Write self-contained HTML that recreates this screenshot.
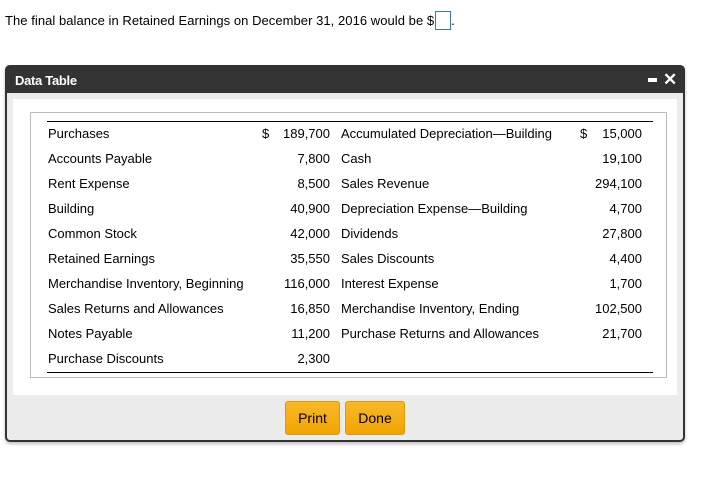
<!DOCTYPE html>
<html><head><style>
*{margin:0;padding:0;box-sizing:border-box}
body{width:701px;height:481px;background:#fff;font-family:"Liberation Sans",Arial,sans-serif;font-size:13px;color:#000;position:relative;overflow:hidden}
.q{position:absolute;left:5px;top:11px;white-space:nowrap;font-size:13px;letter-spacing:0.05px}
.box{display:inline-block;width:16px;height:19px;border:1px solid #3a6fd6;vertical-align:-5px;margin-left:1px}
.dlg{position:absolute;left:5px;top:65px;width:680px;height:377px;background:#ececec;border:2px solid #333;border-top:none;border-radius:5px;box-shadow:0 2px 3px rgba(0,0,0,.25)}
.hd{position:absolute;left:-2px;top:0;width:680px;height:28px;background:#333;border-radius:5px 5px 0 0;color:#fff;font-weight:bold;font-size:13px;padding:8px 0 0 10px;letter-spacing:-.3px}
.hd .mn{position:absolute;right:28px;top:13px;width:9px;height:4px;background:#fff}
.hd .x{position:absolute;right:8px;top:5px;font-size:17px}
.wp{position:absolute;left:6px;top:34px;width:664px;height:296px;background:#fff}
.tb{position:absolute;left:17px;top:13px;width:637px;height:266px;border:1px solid #bbb}
.l1{position:absolute;left:16px;top:8px;width:606px;border-top:1px solid #000}
.l2{position:absolute;left:16px;top:259px;width:606px;border-top:1px solid #000}
.r{position:absolute;left:0;height:20px;width:100%}
.r span{position:absolute;top:0;white-space:nowrap}
.btn{position:absolute;top:336px;height:34px;background:linear-gradient(#f8b82a,#f1a500);border:1px solid #dc9a10;border-radius:3px;font-size:14px;text-align:center;line-height:32px}
</style></head><body>
<div class="q">The final balance in Retained Earnings on December 31, 2016 would be $<span class="box"></span>.</div>
<div class="dlg">
<div class="hd">Data Table<span class="mn"></span><span class="x">✕</span></div>
<div class="wp"><div class="tb">
<div class="l1"></div>
<div id="rows"></div>
<div class="l2"></div>
</div></div>
<div class="btn" style="left:278px;width:55px">Print</div>
<div class="btn" style="left:338px;width:60px">Done</div>
</div>
<script>
var d=[["Purchases","189,700","Accumulated Depreciation—Building","15,000",1],
["Accounts Payable","7,800","Cash","19,100"],
["Rent Expense","8,500","Sales Revenue","294,100"],
["Building","40,900","Depreciation Expense—Building","4,700"],
["Common Stock","42,000","Dividends","27,800"],
["Retained Earnings","35,550","Sales Discounts","4,400"],
["Merchandise Inventory, Beginning","116,000","Interest Expense","1,700"],
["Sales Returns and Allowances","16,850","Merchandise Inventory, Ending","102,500"],
["Notes Payable","11,200","Purchase Returns and Allowances","21,700"],
["Purchase Discounts","2,300","",""]];
var h="";d.forEach(function(r,i){var t=13+i*25;
h+='<div class="r" style="top:'+t+'px"><span style="left:17px">'+r[0]+'</span>'+(r[4]?'<span style="left:231px">$</span>':'')+'<span style="right:336px">'+r[1]+'</span><span style="left:310px">'+r[2]+'</span>'+(r[4]?'<span style="left:549px">$</span>':'')+'<span style="right:24px">'+r[3]+'</span></div>';});
document.getElementById("rows").innerHTML=h;
</script>
</body></html>
